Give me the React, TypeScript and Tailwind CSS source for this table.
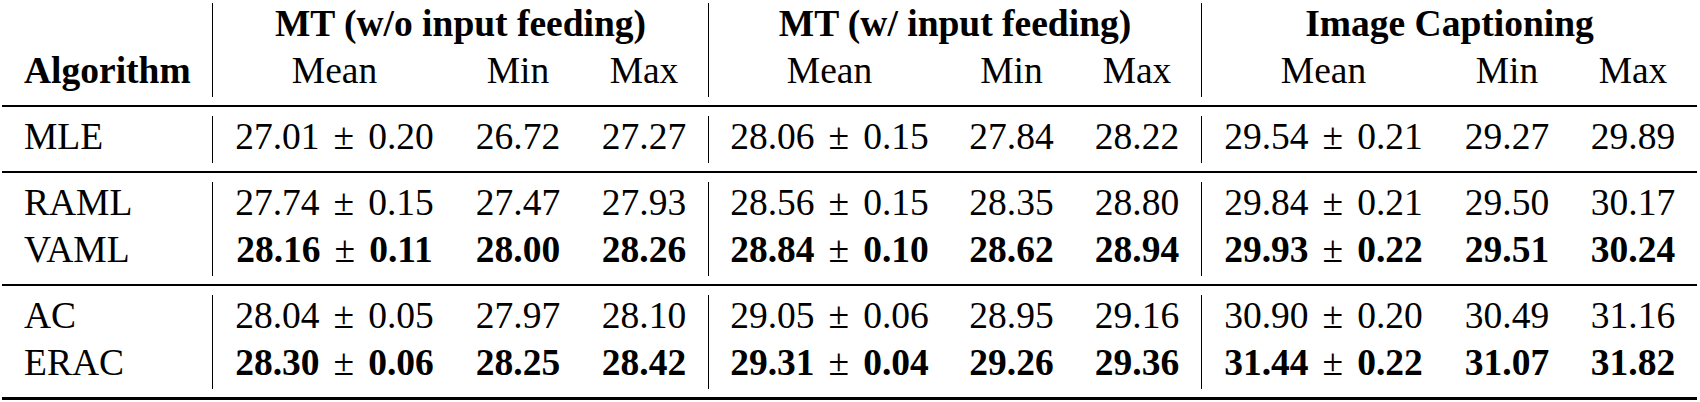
import React from 'react';

type Cell = [string, string];
type Row = { name: string; bold?: boolean; groups: [Cell, string, string][] };

const cols =
    'grid grid-cols-[210px_244px_124px_128px_242px_123px_128px_244px_124px_128px]';

const tasks = ['MT (w/o input feeding)', 'MT (w/ input feeding)', 'Image Captioning'];

const blocks: Row[][] = [
    [
        {
            name: 'MLE',
            groups: [
                [['27.01', '0.20'], '26.72', '27.27'],
                [['28.06', '0.15'], '27.84', '28.22'],
                [['29.54', '0.21'], '29.27', '29.89'],
            ],
        },
    ],
    [
        {
            name: 'RAML',
            groups: [
                [['27.74', '0.15'], '27.47', '27.93'],
                [['28.56', '0.15'], '28.35', '28.80'],
                [['29.84', '0.21'], '29.50', '30.17'],
            ],
        },
        {
            name: 'VAML',
            bold: true,
            groups: [
                [['28.16', '0.11'], '28.00', '28.26'],
                [['28.84', '0.10'], '28.62', '28.94'],
                [['29.93', '0.22'], '29.51', '30.24'],
            ],
        },
    ],
    [
        {
            name: 'AC',
            groups: [
                [['28.04', '0.05'], '27.97', '28.10'],
                [['29.05', '0.06'], '28.95', '29.16'],
                [['30.90', '0.20'], '30.49', '31.16'],
            ],
        },
        {
            name: 'ERAC',
            bold: true,
            groups: [
                [['28.30', '0.06'], '28.25', '28.42'],
                [['29.31', '0.04'], '29.26', '29.36'],
                [['31.44', '0.22'], '31.07', '31.82'],
            ],
        },
    ],
];

const cell = 'h-[47px] leading-[42px] whitespace-nowrap';

const Rule = ({ thick }: { thick?: boolean }) => (
    <div className={thick ? 'mt-[8px] h-[3px] bg-black' : 'mt-[8px] mb-[9px] h-[2px] bg-black'} />
);

const DataRow = ({ row }: { row: Row }) => {
    const w = row.bold ? 'font-bold' : 'font-normal';
    return (
        <>
            <div className={`${cell} pl-[22px]`}>{row.name}</div>
            {row.groups.map(([[m, s], min, max], i) => (
                <React.Fragment key={i}>
                    <div className={`${cell} border-l border-black text-center`}>
                        <span className={w}>{m}</span>
                        <span className="mx-[14px] font-normal">±</span>
                        <span className={w}>{s}</span>
                    </div>
                    <div className={`${cell} text-center ${w}`}>{min}</div>
                    <div className={`${cell} text-center ${w}`}>{max}</div>
                </React.Fragment>
            ))}
        </>
    );
};

const App: React.FC = () => {
    return (
        <div className="w-[1700px] h-[402px] bg-white text-black overflow-hidden font-['Liberation_Serif','Times_New_Roman',serif]">
            <div className="ml-[2px] w-[1695px] pt-[3px] text-[37.5px]">
                {/* header */}
                <div className={cols}>
                    <div className={cell} />
                    {tasks.map((t) => (
                        <div key={t} className={`${cell} col-span-3 border-l border-black text-center font-bold`}>
                            {t}
                        </div>
                    ))}
                    <div className={`${cell} pl-[22px] font-bold`}>Algorithm</div>
                    {tasks.map((t) => (
                        <React.Fragment key={t}>
                            <div className={`${cell} border-l border-black text-center`}>Mean</div>
                            <div className={`${cell} text-center`}>Min</div>
                            <div className={`${cell} text-center`}>Max</div>
                        </React.Fragment>
                    ))}
                </div>

                {blocks.map((rows, bi) => (
                    <React.Fragment key={bi}>
                        <Rule />
                        <div className={cols}>
                            {rows.map((r) => (
                                <DataRow key={r.name} row={r} />
                            ))}
                        </div>
                    </React.Fragment>
                ))}
                <Rule thick />
            </div>
        </div>
    );
};

export default App;
